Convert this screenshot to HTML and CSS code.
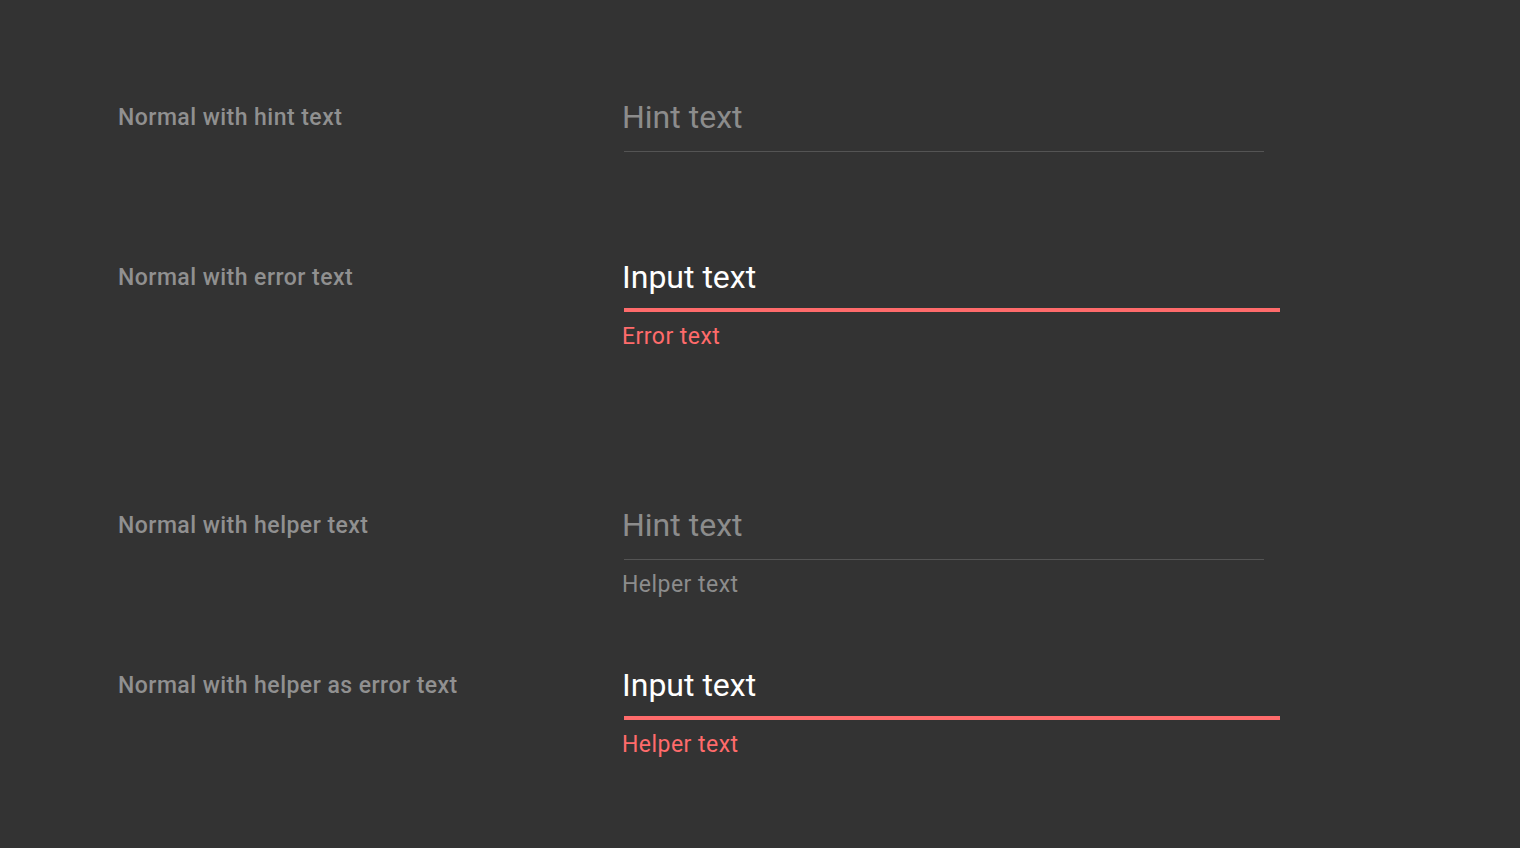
FILE: index.html
```html
<!doctype html>
<html lang="en">
<head>
    <meta charset="UTF-8">
    <meta name="viewport" content="width=device-width, initial-scale=1.0">
    <title>Text fields</title>
    <link rel="stylesheet" href="styles.css">
</head>
<body>
<div class="sheet">
    <div class="label">Normal with hint text</div>
    <div class="field">
        <div class="value hint">Hint text</div>
        <div class="line"></div>
    </div>

    <div class="label">Normal with error text</div>
    <div class="field">
        <div class="value">Input text</div>
        <div class="line error"></div>
        <div class="note error">Error text</div>
    </div>

    <div class="label">Normal with helper text</div>
    <div class="field">
        <div class="value hint">Hint text</div>
        <div class="line"></div>
        <div class="note">Helper text</div>
    </div>

    <div class="label">Normal with helper as error text</div>
    <div class="field">
        <div class="value">Input text</div>
        <div class="line error"></div>
        <div class="note error">Helper text</div>
    </div>
</div>
</body>
</html>
```

FILE: styles.css
```css
html, body {
    margin: 0;
    height: 100%;
}
body {
    background-color: #333333;
    font-family: Roboto, "Liberation Sans", sans-serif;
    overflow: hidden;
}
.sheet {
    display: grid;
    grid-template-columns: 504px 1fr;
    grid-template-rows: 160px 248px 160px auto;
    padding: 97px 0 0 118px;
}
.label {
    padding-top: 7px;
    font-size: 23px;
    line-height: 28px;
    font-weight: 500;
    letter-spacing: 0.02em;
    color: #909090;
}
.field {
    display: flex;
    flex-direction: column;
    align-items: flex-start;
}
.value {
    font-size: 32px;
    line-height: 40px;
    color: #ffffff;
}
.value.hint {
    color: #8c8c8c;
}
.line {
    margin: 14px 0 0 2px;
    width: 640px;
    height: 1px;
    background-color: #545454;
}
.line.error {
    margin-top: 11px;
    width: 656px;
    height: 4px;
    background-color: #ff6b6b;
}
.note {
    margin-top: 11px;
    font-size: 23px;
    line-height: 28px;
    letter-spacing: 0.02em;
    color: #8c8c8c;
}
.note.error {
    color: #ff6b6b;
}
```
